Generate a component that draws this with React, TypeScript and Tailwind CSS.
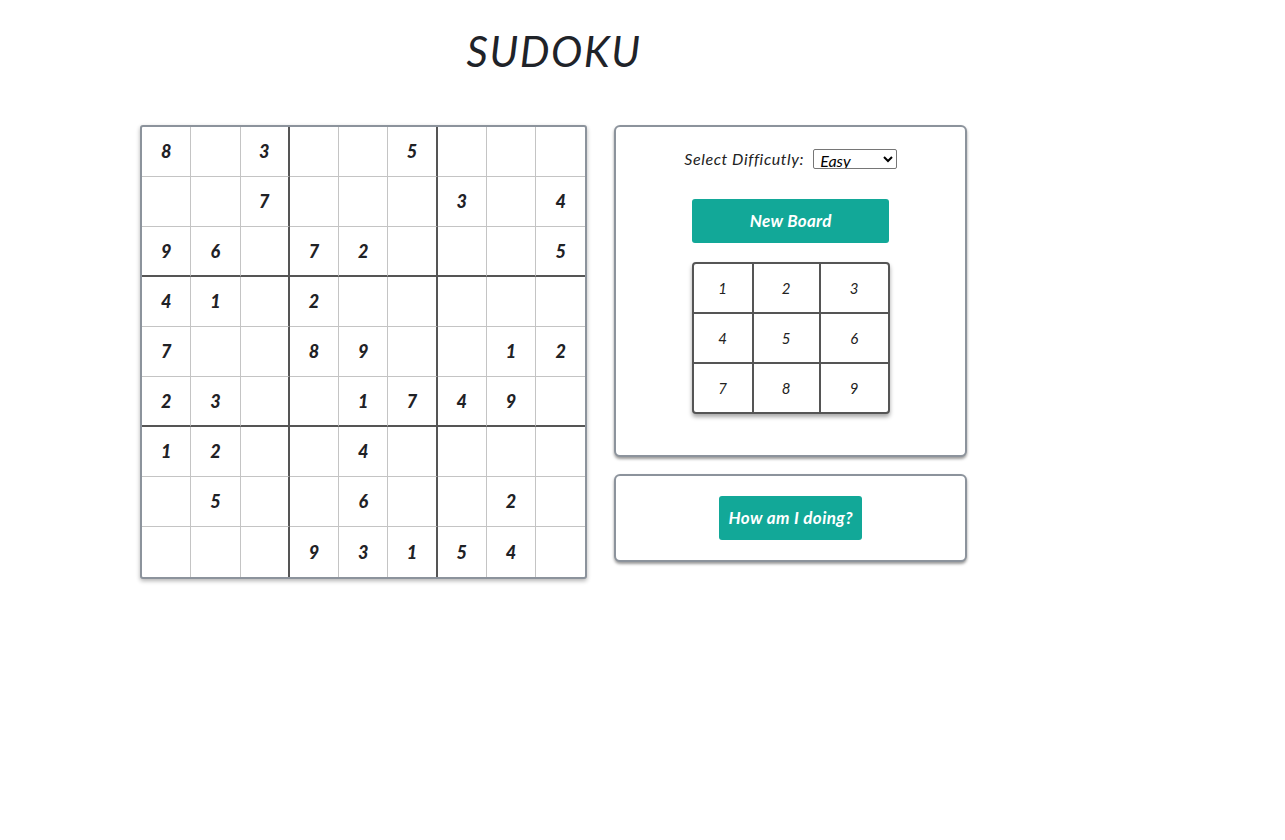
import React, { useState } from 'react';

const board: (number | null)[][] = [
  [8, null, 3, null, null, 5, null, null, null],
  [null, null, 7, null, null, null, 3, null, 4],
  [9, 6, null, 7, 2, null, null, null, 5],
  [4, 1, null, 2, null, null, null, null, null],
  [7, null, null, 8, 9, null, null, 1, 2],
  [2, 3, null, null, 1, 7, 4, 9, null],
  [1, 2, null, null, 4, null, null, null, null],
  [null, 5, null, null, 6, null, null, 2, null],
  [null, null, null, 9, 3, 1, 5, 4, null],
];

const font = { fontFamily: '"Lato", "Open Sans", sans-serif' };

function Board() {
  return (
    <div className="grid grid-cols-9 grid-rows-9 w-[448px] h-[454px] border-2 border-[#8c939c] rounded-[3px] bg-white shadow-[0_2px_4px_rgba(0,0,0,0.3)] overflow-hidden">
      {board.map((row, r) =>
        row.map((val, c) => {
          const right =
            c === 8
              ? ''
              : c % 3 === 2
                ? 'border-r-2 border-r-[#555555]'
                : 'border-r border-r-[#c4c4c4]';
          const bottom =
            r === 8
              ? ''
              : r % 3 === 2
                ? 'border-b-2 border-b-[#555555]'
                : 'border-b border-b-[#c4c4c4]';
          return (
            <div
              key={`${r}-${c}`}
              className={`flex items-center justify-center text-[18px] font-black italic text-[#1f2226] ${right} ${bottom}`}
            >
              {val ?? ''}
            </div>
          );
        })
      )}
    </div>
  );
}

function NumberPad() {
  const rows = [
    [1, 2, 3],
    [4, 5, 6],
    [7, 8, 9],
  ];
  return (
    <div className="border-2 border-[#555555] rounded-[4px] bg-white shadow-[0_3px_4px_rgba(0,0,0,0.35)] overflow-hidden">
      {rows.map((row, r) => (
        <div
          key={r}
          className={`grid grid-cols-[60px_67px_67px] ${r < 2 ? 'border-b-2 border-b-[#555555]' : ''}`}
        >
          {row.map((n, c) => (
            <div
              key={n}
              className={`h-[48px] flex items-center justify-center text-[15px] italic text-[#222] ${c < 2 ? 'border-r-2 border-r-[#555555]' : ''}`}
            >
              {n}
            </div>
          ))}
        </div>
      ))}
    </div>
  );
}

export default function App() {
  const [difficulty, setDifficulty] = useState('easy');

  return (
    <div className="min-h-screen bg-white" style={font}>
      <div className="w-[827px] ml-[140px]">
        <h1 className="text-center text-[42px] italic font-normal tracking-[1.5px] text-[#1f2329] pt-[20px] h-[125px] pl-[1px]">
          SUDOKU
        </h1>
        <div className="flex gap-[27px] items-start">
          <Board />
          <div className="flex flex-col gap-[17px] w-[353px]">
            <div className="border-2 border-[#8c939c] rounded-[6px] shadow-[0_2px_3px_rgba(0,0,0,0.4)] bg-white flex flex-col items-center pt-[22px] pb-[41px]">
              <div className="flex items-center gap-[9px] h-[20px]">
                <span className="text-[16px] italic tracking-[0.6px] text-[#222]">Select Difficutly:</span>
                <select
                  value={difficulty}
                  onChange={(e) => setDifficulty(e.target.value)}
                  className="w-[84px] h-[20px] border border-[#767676] rounded-[2px] text-[16px] italic text-black bg-white pl-[2px]"
                  style={font}
                >
                  <option value="easy">Easy</option>
                  <option value="medium">Medium</option>
                  <option value="hard">Hard</option>
                </select>
              </div>
              <button className="mt-[30px] w-[197px] h-[44px] bg-[#12a898] rounded-[3px] text-white text-[17px] font-bold italic tracking-[0.3px]">
                New Board
              </button>
              <div className="mt-[19px]">
                <NumberPad />
              </div>
            </div>
            <div className="border-2 border-[#8c939c] rounded-[6px] shadow-[0_2px_3px_rgba(0,0,0,0.4)] bg-white flex justify-center pt-[20px] pb-[20px]">
              <button className="w-[143px] h-[44px] bg-[#12a898] rounded-[3px] text-white text-[17px] font-bold italic tracking-[0.4px]">
                How am I doing?
              </button>
            </div>
          </div>
        </div>
      </div>
    </div>
  );
}
